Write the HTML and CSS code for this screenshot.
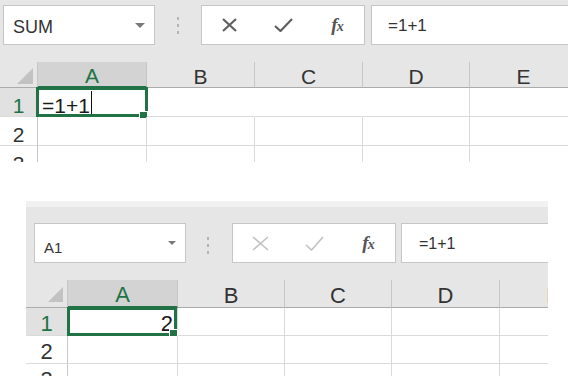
FILE: index.html
```html
<!DOCTYPE html>
<html>

<head>
  <title>Formule =1+1</title>
  <link rel="stylesheet" href="styles.css">
</head>

<body>

  <!-- Saisie de la formule -->
  <div class="sheet top">
    <div class="bar">
      <div class="namebox"><span>SUM</span><i class="caret"></i></div>
      <div class="dots"><i></i><i></i><i></i></div>
      <div class="fbtns">
        <div class="b"><svg width="17" height="14" viewBox="0 0 17 14"><path d="M2 1 L15 13 M15 1 L2 13" /></svg></div>
        <div class="b"><svg width="19" height="14" viewBox="0 0 19 14"><path d="M1 8 L6.5 13 L18 1" /></svg></div>
        <div class="b"><span class="fx">f<span class="x">x</span></span></div>
      </div>
      <div class="formula"><span>=1+1</span></div>
    </div>
    <div class="grid">
      <div class="corner"><i class="tri"></i></div>
      <div class="ch sel">A</div>
      <div class="ch">B</div>
      <div class="ch">C</div>
      <div class="ch">D</div>
      <div class="ch">E</div>

      <div class="rh sel">1</div>
      <div class="c">
        <span>=1+1</span><i class="cursor"></i>
        <div class="selbox"><i class="handle"></i></div>
      </div>
      <div class="c nl"></div>
      <div class="c nl"></div>
      <div class="c"></div>
      <div class="c"></div>

      <div class="rh">2</div>
      <div class="c"></div>
      <div class="c"></div>
      <div class="c"></div>
      <div class="c"></div>
      <div class="c"></div>

      <div class="rh">3</div>
      <div class="c"></div>
      <div class="c"></div>
      <div class="c"></div>
      <div class="c"></div>
      <div class="c"></div>
    </div>
  </div>

  <!-- Résultat après validation -->
  <div class="sheet bottom">
    <div class="bar">
      <div class="namebox"><span>A1</span><i class="caret"></i></div>
      <div class="dots"><i></i><i></i><i></i></div>
      <div class="fbtns off">
        <div class="b"><svg width="19" height="15" viewBox="0 0 19 15"><path d="M2 1 L17 14 M17 1 L2 14" /></svg></div>
        <div class="b"><svg width="19" height="15" viewBox="0 0 19 15"><path d="M1 9 L6.5 14 L18 1" /></svg></div>
        <div class="b"><span class="fx">f<span class="x">x</span></span></div>
      </div>
      <div class="formula"><span>=1+1</span></div>
    </div>
    <div class="grid">
      <div class="corner"><i class="tri"></i></div>
      <div class="ch sel">A</div>
      <div class="ch">B</div>
      <div class="ch">C</div>
      <div class="ch">D</div>
      <div class="ch">E</div>

      <div class="rh sel">1</div>
      <div class="c num">
        <span>2</span>
        <div class="selbox"><i class="handle"></i></div>
      </div>
      <div class="c"></div>
      <div class="c"></div>
      <div class="c"></div>
      <div class="c"></div>

      <div class="rh">2</div>
      <div class="c"></div>
      <div class="c"></div>
      <div class="c"></div>
      <div class="c"></div>
      <div class="c"></div>

      <div class="rh">3</div>
      <div class="c"></div>
      <div class="c"></div>
      <div class="c"></div>
      <div class="c"></div>
      <div class="c"></div>
    </div>
  </div>

</body>

</html>
```

FILE: styles.css
```css
* {
  box-sizing: border-box;
}

body {
  margin: 0;
  background: #fff;
  font-family: "Liberation Sans", Arial, sans-serif;
  color: #222;
}

.sheet {
  overflow: hidden;
  background: #e6e6e6;
}

.sheet.top {
  width: 568px;
  height: 162px;
}

.sheet.bottom {
  width: 522px;
  height: 175px;
  margin: 39px 0 0 26px;
  border-top: 6px solid #f1f1f1;
}

/* barre de formule */
.bar {
  display: flex;
  align-items: flex-start;
}

.top .bar {
  height: 62px;
  padding: 5px 0 0 3px;
}

.bottom .bar {
  height: 73px;
  padding: 16px 0 0 8px;
}

.namebox {
  display: flex;
  align-items: center;
  justify-content: space-between;
  width: 152px;
  height: 40px;
  padding: 0 9px;
  background: #fff;
  border: 1px solid #c6c6c6;
  color: #333;
}

.top .namebox {
  font-size: 18px;
}

.top .namebox span {
  margin-top: 4px;
}

.bottom .namebox {
  font-size: 15px;
}

.bottom .namebox span {
  margin-top: 9px;
}

.caret {
  width: 0;
  height: 0;
  border-left: 5px solid transparent;
  border-right: 5px solid transparent;
  border-top: 5px solid #7a7a7a;
}

.bottom .caret {
  border-left-width: 4.5px;
  border-right-width: 4.5px;
  border-top-width: 4px;
}

.dots {
  display: flex;
  flex-direction: column;
  gap: 4px;
  width: 2px;
}

.dots i {
  display: block;
  width: 2px;
  height: 3px;
  background: #b4b4b4;
}

.top .dots {
  margin: 12px 0 0 22px;
}

.bottom .dots {
  margin: 14px 0 0 21px;
}

.fbtns {
  display: flex;
  width: 164px;
  height: 40px;
  background: #fff;
  border: 1px solid #c6c6c6;
}

.top .fbtns {
  margin-left: 22px;
}

.bottom .fbtns {
  margin-left: 23px;
}

.fbtns .b {
  width: 54px;
  display: flex;
  justify-content: center;
  align-items: center;
}

.fbtns svg path {
  fill: none;
  stroke: #606060;
  stroke-width: 2.2;
}

.fbtns.off svg path {
  stroke: #c2c2c2;
  stroke-width: 1.6;
}

.fx {
  font-family: "Liberation Serif", "DejaVu Serif", serif;
  font-style: italic;
  font-weight: bold;
  font-size: 19px;
  color: #555;
  letter-spacing: -1px;
}

.fx .x {
  font-size: 14px;
}

.formula {
  flex: 1;
  height: 40px;
  display: flex;
  align-items: center;
  background: #fff;
  border: 1px solid #c6c6c6;
  border-right: 0;
  color: #333;
}

.top .formula {
  margin-left: 6px;
  padding-left: 16px;
  font-size: 17px;
}

.top .formula span {
  margin-top: 2px;
}

.bottom .formula {
  margin-left: 5px;
  padding-left: 17px;
  font-size: 16px;
}

.bottom .formula span {
  margin-top: 2px;
}

/* grille */
.grid {
  display: grid;
  background: #fff;
  font-size: 21px;
  line-height: 1;
}

.top .grid {
  grid-template-columns: 38px 109px 108px 108px 107px 108px;
  grid-template-rows: 26px 29px 29px 29px;
}

.bottom .grid {
  grid-template-columns: 42px 110px 107px 107px 108px 108px;
  grid-template-rows: 28px 28px 28px 28px;
  font-size: 22px;
}

.corner {
  display: flex;
  justify-content: flex-end;
  align-items: flex-end;
  background: #e6e6e6;
  border-right: 1px solid #c6c6c6;
  border-bottom: 1px solid #ababab;
}

.top .corner {
  padding: 0 4px 3px 0;
}

.bottom .corner {
  padding: 0 4px 5px 0;
}

.tri {
  display: block;
  width: 16px;
  height: 16px;
  background: #c2c2c2;
  clip-path: polygon(100% 0, 100% 100%, 0 100%);
}

.bottom .tri {
  width: 15px;
  height: 15px;
}

.ch {
  display: flex;
  justify-content: center;
  align-items: flex-end;
  background: #e6e6e6;
  border-right: 1px solid #c6c6c6;
  border-bottom: 1px solid #ababab;
  color: #333;
}

.ch.sel {
  background: #d3d3d3;
  color: #217346;
  border-bottom: 2px solid #217346;
}

.rh {
  display: flex;
  justify-content: center;
  align-items: flex-end;
  border-right: 1px solid #c6c6c6;
  border-bottom: 1px solid #dadada;
  color: #333;
}

.rh.sel {
  background: #e1e1e1;
  color: #217346;
}

.c {
  position: relative;
  display: flex;
  align-items: flex-end;
  padding-left: 4px;
  border-right: 1px solid #dadada;
  border-bottom: 1px solid #dadada;
  color: #1a1a1a;
}

.c.nl {
  border-right-color: #fff;
}

.c.num {
  justify-content: flex-end;
  padding-right: 4px;
}

.cursor {
  align-self: stretch;
  width: 1px;
  margin: 3px 0 0 1px;
  background: #111;
}

.selbox {
  position: absolute;
  border: 3px solid #217346;
}

.top .selbox {
  left: -2px;
  top: -1px;
  right: -2px;
  bottom: -1px;
}

.bottom .selbox {
  left: -1px;
  top: -1px;
  right: 0;
  bottom: -1px;
}

.handle {
  position: absolute;
  width: 9px;
  height: 8px;
  background: #217346;
  border: 1px solid #fff;
}

.top .handle {
  right: -3px;
  bottom: -5px;
}

.bottom .handle {
  right: -4px;
  bottom: -4px;
}
```
